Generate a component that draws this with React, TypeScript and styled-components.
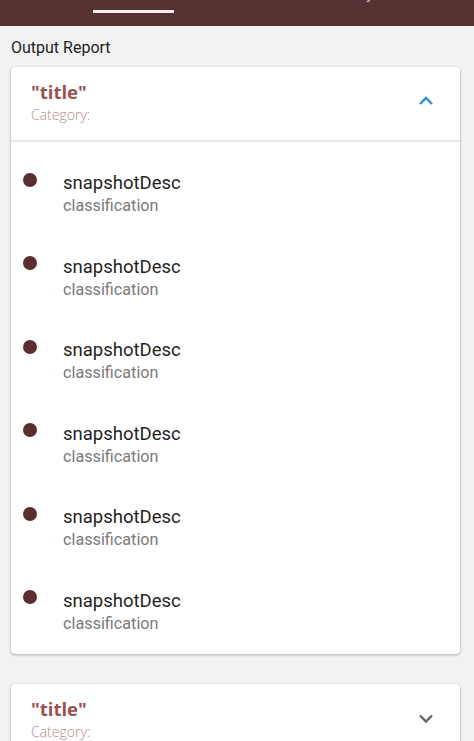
import React from "react";
import styled, { createGlobalStyle } from "styled-components";

const GlobalStyle = createGlobalStyle`
  html, body { margin: 0; padding: 0; background: #f2f2f2; }
  body { font-family: Roboto, "Noto Sans", sans-serif; }
  * { box-sizing: border-box; }
`;

const Page = styled.div`
  width: 474px;
  min-height: 741px;
  background: #f2f2f2;
`;

const Header = styled.header`
  height: 26px;
  background: #583232;
  overflow: hidden;
  display: flex;
  align-items: flex-end;
`;

const TabList = styled.div`
  display: flex;
  gap: 27px;
  padding-left: 93px;
`;

const Tab = styled.div`
  width: 81px;
  display: flex;
  flex-direction: column;
  align-items: center;
  padding-bottom: 13px;
`;

const TabLabel = styled.span<{ $active?: boolean }>`
  font-family: Roboto, sans-serif;
  font-size: 15px;
  line-height: 20px;
  margin-bottom: 6px;
  color: ${(p) => (p.$active ? "#ffffff" : "rgba(255,255,255,0.75)")};
`;

const Indicator = styled.div<{ $active?: boolean }>`
  width: 100%;
  height: 3px;
  background: ${(p) => (p.$active ? "#fbeeee" : "transparent")};
`;

const Content = styled.main`
  padding: 12px 14px 0 11px;
  display: flex;
  flex-direction: column;
`;

const SectionTitle = styled.h2`
  margin: 0 0 9px 0;
  font-family: Roboto, sans-serif;
  font-weight: 400;
  font-size: 16px;
  line-height: 20px;
  color: #222;
`;

const Card = styled.section`
  background: #fff;
  border-radius: 4px;
  box-shadow: 0 1px 3px rgba(0, 0, 0, 0.28), 0 0 1px rgba(0, 0, 0, 0.2);
  margin-bottom: 30px;
`;

const CardHeader = styled.div<{ $open?: boolean }>`
  display: flex;
  align-items: center;
  justify-content: space-between;
  height: 75px;
  padding: 0 27px 0 20px;
  border-bottom: ${(p) => (p.$open ? "2px solid #e6e6e6" : "none")};
`;

const HeaderText = styled.div`
  display: flex;
  flex-direction: column;
  margin-top: -4px;
`;

const CardTitle = styled.span`
  font-family: "Open Sans", sans-serif;
  font-weight: 700;
  font-size: 18.5px;
  line-height: 26px;
  color: #9b5050;
`;

const CardSubtitle = styled.span`
  font-family: "Open Sans", sans-serif;
  font-weight: 300;
  font-size: 14px;
  line-height: 20px;
  color: #b88a8a;
`;

const Chevron = styled.svg`
  width: 14px;
  height: 9px;
  margin-top: -6px;
`;

const List = styled.ul`
  list-style: none;
  margin: 0;
  padding: 29px 0 19px 12px;
  display: flex;
  flex-direction: column;
  gap: 37.5px;
`;

const Item = styled.li`
  display: flex;
  align-items: flex-start;
`;

const Bullet = styled.span`
  width: 14px;
  height: 14px;
  border-radius: 50%;
  background: #5a2e2e;
  margin-top: 1.5px;
  margin-right: 26px;
  flex: 0 0 auto;
`;

const ItemText = styled.div`
  display: flex;
  flex-direction: column;
`;

const ItemTitle = styled.span`
  font-family: Roboto, sans-serif;
  font-size: 18.5px;
  line-height: 24px;
  color: #1f1f1f;
`;

const ItemSub = styled.span`
  font-family: Roboto, sans-serif;
  font-size: 16.2px;
  line-height: 22px;
  color: #7a7a7a;
`;

const ChevronIcon = ({ up }: { up?: boolean }) => (
  <Chevron viewBox="0 0 14 9">
    <polyline
      points={up ? "1,8 7,2 13,8" : "1,1.5 7,7.5 13,1.5"}
      fill="none"
      stroke={up ? "#2a8fe0" : "#666"}
      strokeWidth="2.4"
    />
  </Chevron>
);

const items = Array.from({ length: 6 }, (_, i) => i);

export default function App() {
  return (
    <Page>
      <GlobalStyle />
      <Header>
        <TabList>
          <Tab>
            <TabLabel $active>Results</TabLabel>
            <Indicator $active />
          </Tab>
          <Tab>
            <TabLabel>Details</TabLabel>
            <Indicator />
          </Tab>
          <Tab>
            <TabLabel>History</TabLabel>
            <Indicator />
          </Tab>
        </TabList>
      </Header>
      <Content>
        <SectionTitle>Output Report</SectionTitle>
        <Card>
          <CardHeader $open>
            <HeaderText>
              <CardTitle>"title"</CardTitle>
              <CardSubtitle>Category:</CardSubtitle>
            </HeaderText>
            <ChevronIcon up />
          </CardHeader>
          <List>
            {items.map((i) => (
              <Item key={i}>
                <Bullet />
                <ItemText>
                  <ItemTitle>snapshotDesc</ItemTitle>
                  <ItemSub>classification</ItemSub>
                </ItemText>
              </Item>
            ))}
          </List>
        </Card>
        <Card>
          <CardHeader>
            <HeaderText>
              <CardTitle>"title"</CardTitle>
              <CardSubtitle>Category:</CardSubtitle>
            </HeaderText>
            <ChevronIcon />
          </CardHeader>
        </Card>
      </Content>
    </Page>
  );
}
